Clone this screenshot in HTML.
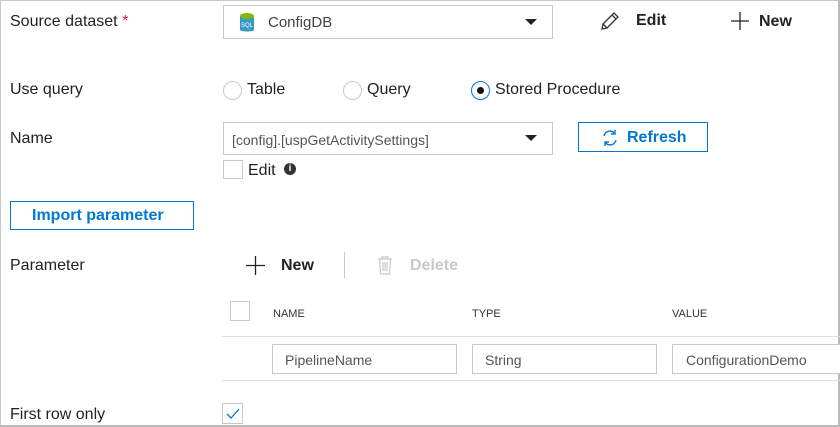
<!DOCTYPE html>
<html><head><style>
body{margin:0;width:840px;height:427px;overflow:hidden;background:#fff;font-family:"Liberation Sans",sans-serif;color:#222;position:relative}
.frame{position:absolute;left:0;top:0;width:837px;height:424px;border:1px solid #c8c8c8;border-right:2px solid #bbb;border-bottom:2px solid #bbb}
.a{position:absolute;white-space:nowrap}
.lbl{font-size:16px}
.box{position:absolute;border:1px solid #c8c8c8;background:#fff;box-sizing:border-box}
.radio{position:absolute;width:19px;height:19px;border:1px solid #c8c8c8;border-radius:50%;box-sizing:border-box}
.caret{position:absolute;width:0;height:0;border-left:6px solid transparent;border-right:6px solid transparent;border-top:6px solid #222}
.hd{font-size:11px;color:#333}
.in{font-size:14px;color:#555}
</style></head><body>
<div class="frame"></div>
<div class="a lbl" style="left:10px;top:13px">Source dataset <span style="color:#c4262e">*</span></div>
<div class="box" style="left:223px;top:5px;width:330px;height:34px"></div>
<svg class="a" style="left:239px;top:12px" width="16" height="22" viewBox="0 0 16 22"><path d="M1 4v14c0 2 14 2 14 0V4z" fill="#3999c6"/><ellipse cx="8" cy="4" rx="7" ry="3" fill="#7fba00"/><text x="8" y="15" font-size="6" fill="#fff" text-anchor="middle" font-family="Liberation Sans">SQL</text></svg>
<div class="a" style="left:268px;top:14px;font-size:15px;color:#444">ConfigDB</div>
<div class="caret" style="left:525px;top:19px"></div>
<svg class="a" style="left:600px;top:11px" width="20" height="20" viewBox="0 0 20 20"><path d="M2 18l1-5L14 2l4 4L7 17z M12 4l4 4 M3 13l4 4" fill="none" stroke="#333" stroke-width="1.3"/></svg>
<div class="a" style="left:636px;top:12px;font-size:16px;font-weight:bold;color:#222">Edit</div>
<svg class="a" style="left:730px;top:11px" width="20" height="20"><path d="M10 1v18M1 10h18" stroke="#222" stroke-width="1.3"/></svg>
<div class="a" style="left:759px;top:13px;font-size:16px;font-weight:bold">New</div>

<div class="a lbl" style="left:10px;top:81px">Use query</div>
<div class="radio" style="left:223px;top:81px"></div><div class="a lbl" style="left:247px;top:81px">Table</div>
<div class="radio" style="left:343px;top:81px"></div><div class="a lbl" style="left:367px;top:81px">Query</div>
<div class="radio" style="left:471px;top:81px;border-color:#0078d4"><div style="position:absolute;left:5px;top:5px;width:7px;height:7px;border-radius:50%;background:#111"></div></div>
<div class="a lbl" style="left:495px;top:81px">Stored Procedure</div>

<div class="a lbl" style="left:10px;top:130px">Name</div>
<div class="box" style="left:223px;top:122px;width:330px;height:33px"></div>
<div class="a" style="left:232px;top:132px;font-size:14px;color:#555">[config].[uspGetActivitySettings]</div>
<div class="caret" style="left:525px;top:135px"></div>
<div class="box" style="left:578px;top:122px;width:130px;height:30px;border-color:#0078d4"></div>
<svg class="a" style="left:601px;top:129px" width="18" height="18" viewBox="0 0 18 18"><path d="M3 7a6 6 0 0 1 11-2M15 11a6 6 0 0 1-11 2" fill="none" stroke="#0078d4" stroke-width="1.4"/><path d="M14 1v4h-4M4 17v-4h4" fill="none" stroke="#0078d4" stroke-width="1.4"/></svg>
<div class="a" style="left:627px;top:129px;font-size:16px;font-weight:bold;color:#0078d4">Refresh</div>

<div class="box" style="left:223px;top:160px;width:20px;height:19px"></div>
<div class="a lbl" style="left:248px;top:162px">Edit</div>
<div class="a" style="left:284px;top:163px;width:12px;height:12px;border-radius:50%;background:#333;color:#fff;font-size:10px;font-weight:bold;text-align:center;line-height:12px">i</div>

<div class="box" style="left:10px;top:201px;width:184px;height:29px;border-color:#0078d4"></div>
<div class="a" style="left:32px;top:207px;font-size:16px;font-weight:bold;color:#0078d4">Import parameter</div>

<div class="a lbl" style="left:10px;top:257px">Parameter</div>
<svg class="a" style="left:245px;top:255px" width="21" height="21"><path d="M10.5 1v19M1 10.5h19" stroke="#222" stroke-width="1.3"/></svg>
<div class="a" style="left:281px;top:257px;font-size:16px;font-weight:bold">New</div>
<div class="a" style="left:344px;top:252px;width:1px;height:26px;background:#c8c8c8"></div>
<svg class="a" style="left:376px;top:255px" width="18" height="20" viewBox="0 0 18 20"><path d="M2 4h14M6 4V2h6v2M3.5 4l1 15h9l1-15M7 7v9M9 7v9M11 7v9" fill="none" stroke="#c8c8c8" stroke-width="1.2"/></svg>
<div class="a" style="left:410px;top:257px;font-size:16px;font-weight:bold;color:#c8c8c8">Delete</div>

<div class="box" style="left:230px;top:301px;width:20px;height:20px"></div>
<div class="a hd" style="left:273px;top:308px">NAME</div>
<div class="a hd" style="left:472px;top:308px">TYPE</div>
<div class="a hd" style="left:672px;top:308px">VALUE</div>
<div class="a" style="left:222px;top:336px;width:618px;height:1px;background:#ddd"></div>
<div class="box" style="left:272px;top:344px;width:185px;height:30px"></div><div class="a in" style="left:285px;top:352px">PipelineName</div>
<div class="box" style="left:472px;top:344px;width:185px;height:30px"></div><div class="a in" style="left:485px;top:352px">String</div>
<div class="box" style="left:672px;top:344px;width:180px;height:30px"></div><div class="a in" style="left:686px;top:352px">ConfigurationDemo</div>
<div class="a" style="left:222px;top:380px;width:618px;height:1px;background:#ddd"></div>

<div class="a lbl" style="left:10px;top:406px">First row only</div>
<div class="box" style="left:222px;top:403px;width:21px;height:21px"></div>
<svg class="a" style="left:225px;top:406px" width="15" height="15"><path d="M2 8l4 4 8-9" fill="none" stroke="#0078d4" stroke-width="1.3"/></svg>
</body></html>
